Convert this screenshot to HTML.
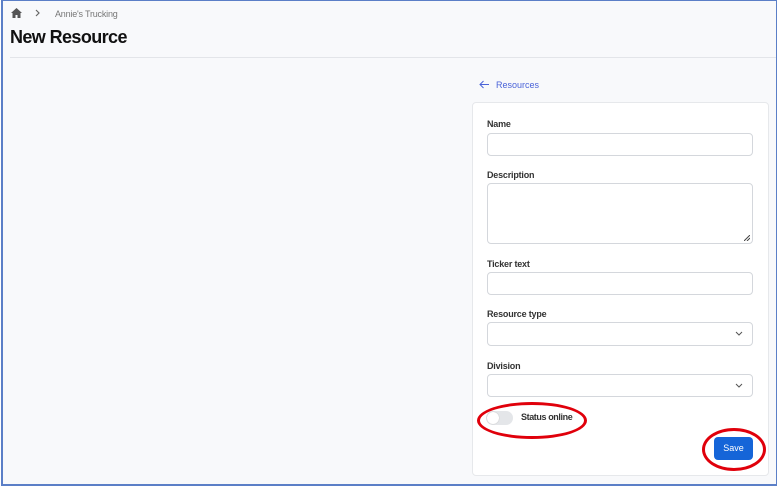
<!DOCTYPE html>
<html><head><style>
*{box-sizing:border-box;margin:0;padding:0}
body{width:778px;height:487px;background:#fff;font-family:"Liberation Sans",sans-serif;position:relative;overflow:hidden}
.frame{position:absolute;left:1px;top:0;width:776px;height:486px;border:1px solid #5b7fc7;border-width:1px 1px 2px 2px;background:#f8f9fb}
.abs{position:absolute}
.lbl{position:absolute;left:487px;font-size:9px;font-weight:bold;color:#333;letter-spacing:-0.2px}
.inp{position:absolute;left:487px;width:266px;background:#fff;border:1px solid #d4d7dc;border-radius:4px}
.chev{position:absolute;right:9px;top:8px}
</style></head><body>
<div class="frame"></div>
<svg class="abs" style="left:11px;top:8px" width="11" height="10" viewBox="0 0 11 10"><path d="M5.5 0L0 5h1.5v5h3V7h2v3h3V5H11z" fill="#555"/></svg>
<svg class="abs" style="left:35px;top:9px" width="6" height="8" viewBox="0 0 6 8"><path d="M1 1l3 3-3 3" stroke="#666" fill="none" stroke-width="1.2"/></svg>
<div class="abs" style="left:55px;top:9px;font-size:9px;color:#777;letter-spacing:-0.2px">Annie's Trucking</div>
<div class="abs" style="left:10px;top:27px;font-size:18px;font-weight:bold;color:#111;letter-spacing:-0.6px">New Resource</div>
<div class="abs" style="left:10px;top:57px;width:766px;height:1px;background:#e3e5e9"></div>
<svg class="abs" style="left:479px;top:80px" width="11" height="9" viewBox="0 0 11 9"><path d="M10 4.5H1M4.5 1L1 4.5 4.5 8" stroke="#4a63d8" fill="none" stroke-width="1"/></svg>
<div class="abs" style="left:496px;top:80px;font-size:9px;color:#4a63d8">Resources</div>
<div class="abs" style="left:472px;top:102px;width:297px;height:374px;background:#fff;border:1px solid #e6e8eb;border-radius:4px"></div>
<div class="lbl" style="top:119px">Name</div>
<div class="inp" style="top:133px;height:23px"></div>
<div class="lbl" style="top:170px">Description</div>
<div class="inp" style="top:183px;height:61px"><svg class="abs" style="right:2px;bottom:2px" width="6" height="6"><path d="M6 0L0 6M6 3L3 6" stroke="#444"/></svg></div>
<div class="lbl" style="top:259px">Ticker text</div>
<div class="inp" style="top:272px;height:23px"></div>
<div class="lbl" style="top:309px">Resource type</div>
<div class="inp" style="top:322px;height:24px"><svg class="chev" width="8" height="6"><path d="M1 1l3 3 3-3" stroke="#555" fill="none"/></svg></div>
<div class="lbl" style="top:361px">Division</div>
<div class="inp" style="top:374px;height:23px"><svg class="chev" width="8" height="6"><path d="M1 1l3 3 3-3" stroke="#555" fill="none"/></svg></div>
<div class="abs" style="left:486px;top:411px;width:27px;height:14px;border-radius:7px;background:#e4e6e9"></div>
<div class="abs" style="left:487px;top:412px;width:12px;height:12px;border-radius:6px;background:#fff;box-shadow:0 0 1px #aaa"></div>
<div class="abs" style="left:521px;top:412px;font-size:9px;font-weight:bold;color:#333;letter-spacing:-0.4px">Status online</div>
<div class="abs" style="left:714px;top:437px;width:39px;height:23px;border-radius:4px;background:#1565d8;color:#fff;font-size:9px;text-align:center;line-height:23px">Save</div>
<div class="abs" style="left:477px;top:402px;width:110px;height:37px;border:3.5px solid #e0000b;border-radius:50%"></div>
<div class="abs" style="left:702px;top:428px;width:64px;height:43px;border:3.5px solid #e0000b;border-radius:50%"></div>
</body></html>
